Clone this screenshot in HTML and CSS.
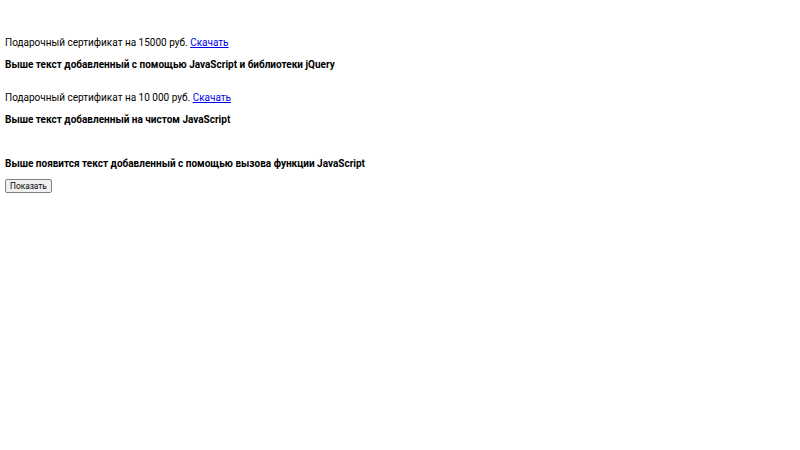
FILE: index.html
```html
<!DOCTYPE html>
<html lang="ru">
<head>
<meta charset="utf-8">
<title>Подарочный сертификат</title>
<link rel="stylesheet" href="styles.css">
</head>
<body>
<main class="page">
  <p class="gift first">Подарочный сертификат на 15000 руб. <a href="#" class="link">Скачать</a></p>
  <p class="note">Выше текст добавленный с помощью JavaScript и библиотеки jQuery</p>
  <p class="gift second">Подарочный сертификат на 10 000 руб. <a href="#" class="link">Скачать</a></p>
  <p class="note">Выше текст добавленный на чистом JavaScript</p>
  <p class="note third">Выше появится текст добавленный с помощью вызова функции JavaScript</p>
  <button class="btn" type="button">Показать</button>
</main>
</body>
</html>
```
FILE: styles.css
```css
html, body {
  margin: 0;
  padding: 0;
  background: #ffffff;
}
.page {
  padding: 5px;
  font-family: Roboto, "Noto Sans", sans-serif;
  font-size: 10px;
  line-height: 13px;
  color: #000000;
  display: flex;
  flex-direction: column;
  align-items: flex-start;
}
.gift, .note {
  margin: 9px 0 0 0;
}
.first {
  margin-top: 30.5px;
}
.second {
  margin-top: 20px;
}
.third {
  margin-top: 31px;
}
.note {
  font-weight: bold;
}
.link {
  color: #0000ee;
  text-decoration: underline;
}
.btn {
  margin-top: 9.5px;
  font-family: Roboto, "Noto Sans", sans-serif;
  font-size: 8.3px;
  line-height: 10px;
  padding: 1px 4px;
  border: 1px solid #808080;
  border-radius: 2px;
  background: #f0f0f0;
  color: #000000;
}
```
